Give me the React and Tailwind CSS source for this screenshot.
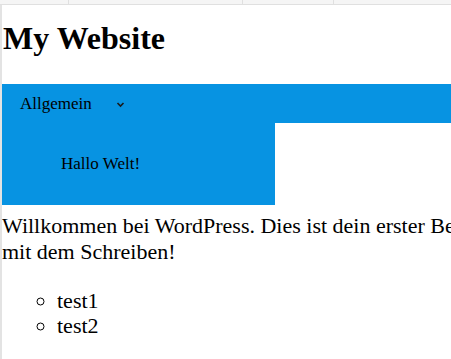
export default function App() {
  return (
    <div className="w-[451px] h-[359px] overflow-hidden bg-white text-black" style={{ fontFamily: '"Liberation Serif", "Times New Roman", serif' }}>
      <div className="flex h-[5px] bg-[#f5f5f5] border-b border-[#e0e0e0]">
        <div className="w-[69px] border-r border-[#e0e0e0]" />
        <div className="w-[174px] border-r border-[#e0e0e0]" />
        <div className="w-[91px] border-r border-[#e0e0e0]" />
        <div className="flex-1" />
      </div>
      <div className="flex h-[354px]">
        <div className="w-[2px] shrink-0 bg-[#e3e3e3]" />
        <div className="flex-1 min-w-0 overflow-hidden">
          <h1 className="text-[32px] font-bold leading-[37px] mt-[15px] mb-[27px] pl-px">My Website</h1>
          <nav className="h-[39px] bg-[#0793e2] flex items-center pl-[18px]">
            <span className="text-[17px] leading-[39px]">Allgemein</span>
            <svg className="ml-[24px] mt-[1px]" width="9" height="7" viewBox="0 0 9 7" fill="none">
              <path d="M1.5 2 L4.5 5 L7.5 2" stroke="#1a1a1a" strokeWidth="1.6" />
            </svg>
          </nav>
          <div className="w-[273px] h-[82px] bg-[#0793e2] pl-[59px] pt-[31px]">
            <p className="text-[17px] leading-[20px]">Hallo Welt!</p>
          </div>
          <p className="text-[22px] leading-[26px] mt-[8px] whitespace-nowrap">
            Willkommen bei WordPress. Dies ist dein erster Beitrag. Bearbeite oder lösche ihn und beginne dann
            <br />
            mit dem Schreiben!
          </p>
          <ul className="list-[circle] pl-[55px] mt-[23px] text-[22px] leading-[25px]">
            <li>test1</li>
            <li>test2</li>
          </ul>
        </div>
      </div>
    </div>
  );
}
